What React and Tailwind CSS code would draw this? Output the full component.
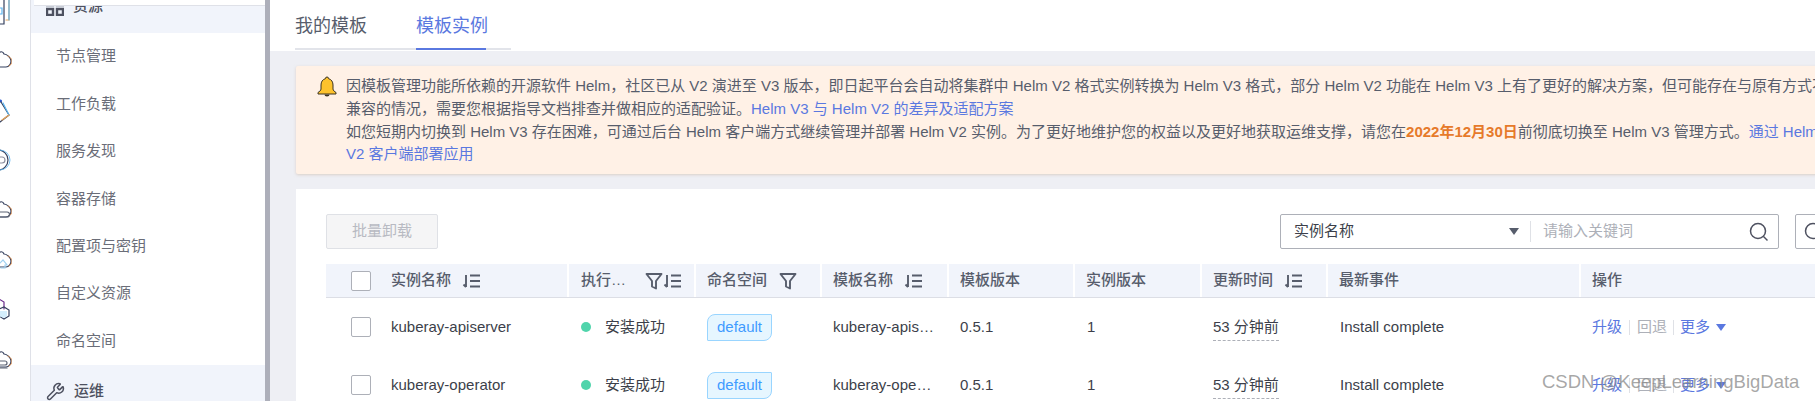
import React from "react";
import { Wrench } from "lucide-react";

const sideItems = ["节点管理", "工作负载", "服务发现", "容器存储", "配置项与密钥", "自定义资源", "命名空间"];

const rows = [
  { name: "kuberay-apiserver", template: "kuberay-apis…" },
  { name: "kuberay-operator", template: "kuberay-ope…" },
];

const tableCols = "grid grid-cols-[241px_127px_126px_127px_126px_127px_126px_253px_300px]";

function SortIcon() {
  return (
    <svg width="20" height="16" viewBox="0 0 20 16" fill="none" stroke="#575d6c" strokeWidth="1.9" className="shrink-0">
      <path d="M4 2v12M1.5 11.5 4 14" />
      <path d="M8 2.500h10M8 8h10M8 13.500h10" />
    </svg>
  );
}

function FilterIcon() {
  return (
    <svg width="18" height="18" viewBox="0 0 18 18" fill="none" stroke="#575d6c" strokeWidth="1.9" className="shrink-0">
      <path d="M1.500 2h15L11 9v7.500l-4-2V9z" strokeLinejoin="round" />
    </svg>
  );
}

function Checkbox() {
  return <span className="block w-5 h-5 bg-white border border-[#adb0b8] rounded-[2px] shrink-0" />;
}

// rail icons, only their right part is left in the picture
function RailIcon({ children }) {
  return (
    <div className="h-[50px] flex items-center shrink-0">
      <svg width="12" height="32" viewBox="0 0 12 32" fill="none" strokeWidth="1.2" strokeLinecap="round">
        {children}
      </svg>
    </div>
  );
}

function CloudEdge({ children }) {
  return (
    <g transform="translate(0 4)">
      <path d="M-2 6c2-3 5-3 6 0 3 0 7 4 7 7 0 3-2 6-5 6H-2" stroke="#35405e" />
      <path d="M8 8c2 1 4 3 4 5s-1 4-3 5" stroke="#e58a3c" strokeWidth="0.8" />
      {children}
    </g>
  );
}

function Rail() {
  return (
    <div className="w-[31px] shrink-0 border-r border-[#dfe1e8] bg-white flex flex-col -mt-[15px] h-[430px] overflow-hidden">
      <RailIcon>
        <path d="M-2 4h6v26h-6" stroke="#35405e" />
        <path d="M6 4h3v22H6" stroke="#e9a65a" />
        <path d="M9 4v22" stroke="#5bb4ef" />
        <path d="M0 14h2v6H0" stroke="#5bb4ef" />
      </RailIcon>
      <RailIcon>
        <CloudEdge />
      </RailIcon>
      <RailIcon>
        <circle cx="0.5" cy="7" r="1.6" fill="#2c5bd0" />
        <path d="M1 8l8 13-9 7" stroke="#35405e" />
        <path d="M3 9l6 12" stroke="#5bb4ef" />
        <path d="M9 21l-7 5" stroke="#e9a65a" />
      </RailIcon>
      <RailIcon>
        <path d="M-2 6a10 10 0 0 1 0 20" stroke="#35405e" />
        <path d="M0 6a10 10 0 0 1 0 20" stroke="#5bb4ef" strokeWidth="0.8" />
        <path d="M-2 13h4a3 3 0 0 1 0 6h-4" stroke="#8c90a0" />
      </RailIcon>
      <RailIcon>
        <CloudEdge>
          <path d="M-2 14h9a2 2 0 0 1 0 5h-9" stroke="#5d6475" />
        </CloudEdge>
      </RailIcon>
      <RailIcon>
        <CloudEdge>
          <path d="M-2 17l5-5 4 5H5v3H1" stroke="#9fd0f0" />
        </CloudEdge>
      </RailIcon>
      <RailIcon>
        <path d="M-1 5l5 3v7" stroke="#6a2c8c" />
        <path d="M-1 15l5-2 5 3v6l-5 3-5-3" stroke="#35405e" />
        <path d="M-1 17h8v5l-3 2-5-2z" fill="#d3edfc" />
      </RailIcon>
      <RailIcon>
        <CloudEdge>
          <path d="M-2 13h7a2 2 0 0 1 0 4h-7M-2 20h9" stroke="#5d6475" />
        </CloudEdge>
      </RailIcon>
      <RailIcon>
        <path d="M-2 18l4 2 3 4" stroke="#35405e" />
      </RailIcon>
    </div>
  );
}

function Sidebar() {
  return (
    <div className="relative w-[234px] shrink-0 bg-white flex flex-col overflow-hidden text-[15px]">
      <div className="absolute left-[3px] top-0 w-[234px] h-[6px] bg-white border-b border-[#dfe1e8]" />
      <div className="h-[53px] -mt-[20px] shrink-0 bg-[#f1f4fb] flex items-center pl-[15px] gap-[9px] font-medium text-[#4e5160]">
        <svg width="18" height="18" viewBox="0 0 18 18" fill="none" stroke="#4e5160" strokeWidth="2.4">
          <path d="M1 1h6v6H1zM11 1h6v6h-6zM1 11h6v6H1zM11 11h6v6h-6z" />
        </svg>
        <span>资源</span>
      </div>
      {sideItems.map((item) => (
        <div key={item} className="h-[47.4px] shrink-0 flex items-center pl-[25px] text-[#6a6d78]">
          {item}
        </div>
      ))}
      <div className="h-[53px] shrink-0 bg-[#f1f4fb] flex items-center pl-[15px] gap-[9px] font-medium text-[#4e5160]">
        <Wrench size={19} strokeWidth={1.9} color="#4e5160" />
        <span>运维</span>
      </div>
    </div>
  );
}

function Alert() {
  return (
    <div className="mt-[15px] ml-[26px] w-[1700px] h-[108px] shrink-0 bg-[#fff1e6] rounded-[2px] shadow-[0_1px_3px_rgba(200,180,160,0.5)] pl-[21px] pt-[9px] flex gap-[9px] text-[15px] leading-[22.8px] text-[#575d6c] whitespace-nowrap">
      <svg width="20" height="21" viewBox="0 0 20 21" className="shrink-0 mt-[1px]">
        <path
          d="M10 1a1.500 1.500 0 0 1 1.500 1.600C14.500 3.400 16 6 16 9v4c0 1.500 1.500 2.500 3 3.500V18H1v-1.500c1.500-1 3-2 3-3.500V9c0-3 1.500-5.600 4.500-6.400A1.500 1.500 0 0 1 10 1z"
          fill="#fdc22d"
          stroke="#3b3320"
          strokeWidth="1"
        />
        <path d="M7.500 18.500a2.500 2 0 0 0 5 0z" fill="#3b3320" />
      </svg>
      <div>
        <div>因模板管理功能所依赖的开源软件 Helm，社区已从 V2 演进至 V3 版本，即日起平台会自动将集群中 Helm V2 格式实例转换为 Helm V3 格式，部分 Helm V2 功能在 Helm V3 上有了更好的解决方案，但可能存在与原有方式不</div>
        <div>
          兼容的情况，需要您根据指导文档排查并做相应的适配验证。
          <span className="text-[#5a78e0]">Helm V3 与 Helm V2 的差异及适配方案</span>
        </div>
        <div>
          如您短期内切换到 Helm V3 存在困难，可通过后台 Helm 客户端方式继续管理并部署 Helm V2 实例。为了更好地维护您的权益以及更好地获取运维支撑，请您在
          <span className="font-bold text-[#e67a2a]">2022年12月30日</span>
          前彻底切换至 Helm V3 管理方式。
          <span className="text-[#5a78e0]">通过 Helm</span>
        </div>
        <div className="text-[#5a78e0]">V2 客户端部署应用</div>
      </div>
    </div>
  );
}

function HeadCell({ children, className = "" }) {
  return (
    <div className={`h-[33px] bg-[#f1f4fb] border-l-2 border-white flex items-center pl-[11px] font-medium text-[#575d6c] ${className}`}>
      {children}
    </div>
  );
}

function TableHead() {
  return (
    <div className={`${tableCols} border-b border-[#dcdee5]`}>
      <div className="h-[33px] bg-[#f1f4fb] flex items-center pl-[25px]">
        <Checkbox />
        <span className="ml-5 font-medium text-[#575d6c]">实例名称</span>
        <span className="ml-[11px]"><SortIcon /></span>
      </div>
      <HeadCell className="pl-[12px]">
        <span>执行…</span>
        <span className="ml-[19px]"><FilterIcon /></span>
        <SortIcon />
      </HeadCell>
      <HeadCell>
        <span>命名空间</span>
        <span className="ml-3"><FilterIcon /></span>
      </HeadCell>
      <HeadCell>
        <span>模板名称</span>
        <span className="ml-[11px]"><SortIcon /></span>
      </HeadCell>
      <HeadCell>模板版本</HeadCell>
      <HeadCell>实例版本</HeadCell>
      <HeadCell>
        <span>更新时间</span>
        <span className="ml-[11px]"><SortIcon /></span>
      </HeadCell>
      <HeadCell>最新事件</HeadCell>
      <HeadCell>操作</HeadCell>
    </div>
  );
}

function TableRow({ row }) {
  return (
    <div className={`${tableCols} h-[58px] items-center text-[#3c3f4a]`}>
      <div className="flex items-center pl-[25px]">
        <Checkbox />
        <span className="ml-5">{row.name}</span>
      </div>
      <div className="flex items-center pl-[14px] gap-[14px]">
        <span className="w-[10px] h-[10px] rounded-full bg-[#50d4ab]" />
        <span>安装成功</span>
      </div>
      <div className="pl-[13px]">
        <span className="inline-flex items-center justify-center w-[65px] h-[27px] bg-[#e6f6ff] border border-[#99d5ff] rounded-tl-[8px] rounded-br-[8px] rounded-tr-[1px] rounded-bl-[1px] text-[#3f9bff]">
          default
        </span>
      </div>
      <div className="pl-[13px]">{row.template}</div>
      <div className="pl-[13px]">0.5.1</div>
      <div className="pl-[14px]">1</div>
      <div className="pl-[13px]">
        <span className="inline-block mt-[4px] leading-[20px] pb-[3px] border-b border-dashed border-[#adb0b8]">53 分钟前</span>
      </div>
      <div className="pl-[14px]">Install complete</div>
      <div className="pl-[13px] flex items-center">
        <span className="text-[#5a78e0]">升级</span>
        <span className="w-px h-[15px] bg-[#dfe1e6] mx-[7px]" />
        <span className="text-[#adb0b8]">回退</span>
        <span className="w-px h-[15px] bg-[#dfe1e6] mx-[6px]" />
        <span className="text-[#5a78e0]">更多</span>
        <svg width="10" height="7" viewBox="0 0 10 7" className="ml-[6px]">
          <path d="M0 0h10L5 7z" fill="#5a78e0" />
        </svg>
      </div>
    </div>
  );
}

function Toolbar() {
  return (
    <div className="flex items-center h-[35px]">
      <div className="w-[112px] h-[35px] bg-[#f5f5f6] border border-[#dfe1e6] rounded-[2px] flex items-center justify-center text-[#b8bac2]">
        批量卸载
      </div>
      <div className="ml-[842px] w-[499px] h-[35px] shrink-0 bg-white border border-[#adb0b8] rounded-[2px] flex items-center pl-[13px] pr-[9px]">
        <span className="text-[#3c3f4a]">实例名称</span>
        <svg width="10" height="7" viewBox="0 0 10 7" className="ml-[155px]">
          <path d="M0 0h10L5 7z" fill="#575d6c" />
        </svg>
        <span className="w-px h-[21px] bg-[#dfe1e6] ml-[11px]" />
        <span className="ml-[12px] text-[#adb0b8]">请输入关键词</span>
        <svg width="20" height="20" viewBox="0 0 20 20" fill="none" stroke="#4e5160" strokeWidth="1.5" className="ml-auto">
          <circle cx="9" cy="9" r="7.500" />
          <path d="M14.500 14.500 18.500 18.500" />
        </svg>
      </div>
      <div className="ml-4 w-[36px] h-[35px] shrink-0 bg-white border border-[#adb0b8] rounded-[2px] flex items-center pl-[8px]">
        <svg width="20" height="20" viewBox="0 0 20 20" fill="none" stroke="#4e5160" strokeWidth="1.5" className="shrink-0">
          <circle cx="9" cy="9" r="7.500" />
        </svg>
      </div>
    </div>
  );
}

export default function App() {
  return (
    <div className="relative w-[1815px] h-[401px] overflow-hidden flex bg-white font-['Liberation_Sans','Noto_Sans_CJK_SC',sans-serif] text-[15px]">
      <Rail />
      <Sidebar />
      <div className="w-[5px] shrink-0 bg-[#adafba]" />
      <div className="flex-1 min-w-0 bg-[#eeeff4] flex flex-col overflow-hidden">
        <div className="h-[51px] shrink-0 bg-white pl-[25px]">
          <div className="w-[216px] h-[50px] border-b-2 border-[#e2e4ea] flex gap-[49px] text-[18px] leading-[52px] text-[#575d6c]">
            <span className="h-[50px]">我的模板</span>
            <span className="h-[50px] w-[70px] border-b-2 border-[#5a78e0] text-[#5a78e0] whitespace-nowrap">模板实例</span>
          </div>
        </div>
        <Alert />
        <div className="mt-[15px] ml-[26px] w-[1700px] flex-1 shrink-0 bg-white pl-[30px] pt-[25px]">
          <Toolbar />
          <div className="mt-[15px]">
            <TableHead />
            {rows.map((row) => (
              <TableRow key={row.name} row={row} />
            ))}
          </div>
        </div>
      </div>
      <div className="absolute left-[1542px] top-[371px] text-[18.500px] leading-[22px] text-[#8a8a8a]/75 whitespace-nowrap">
        CSDN @KeepLearningBigData
      </div>
    </div>
  );
}
